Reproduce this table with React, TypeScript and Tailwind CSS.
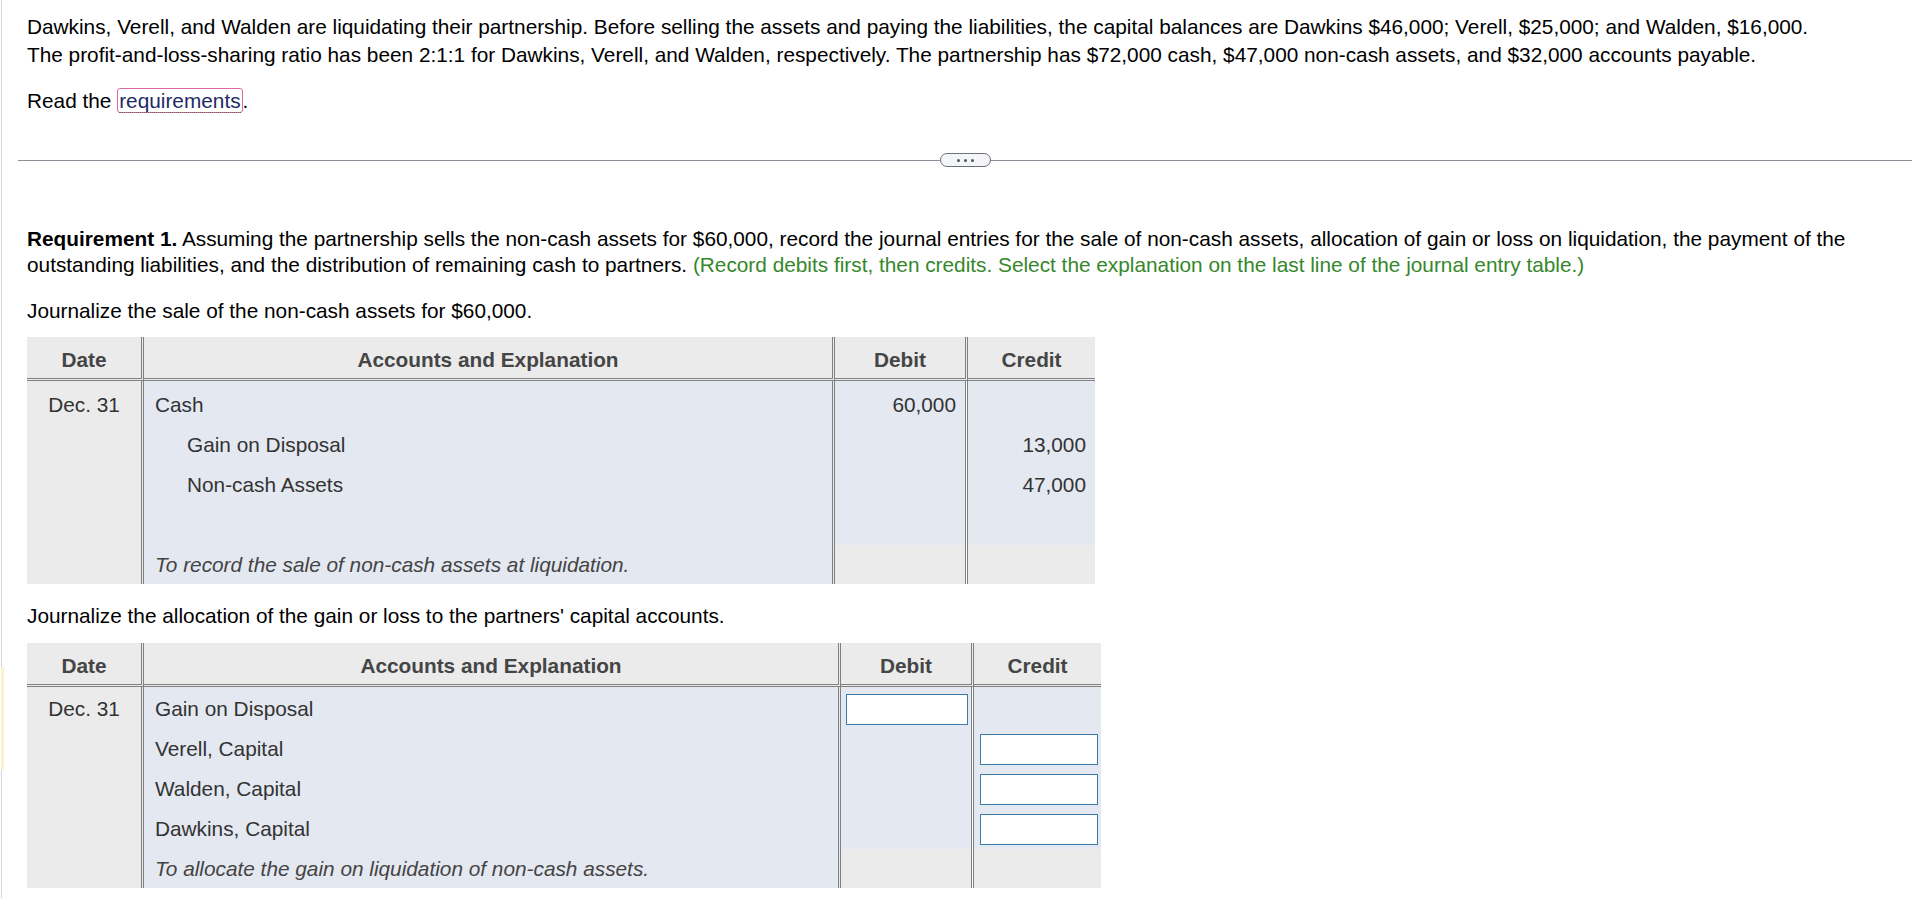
import React from 'react';

type Line = {
  text: string;
  indent?: boolean;
  debit?: string;
  credit?: string;
  debitInput?: boolean;
  creditInput?: boolean;
};

type TableProps = {
  acctW: string;
  bodyPad: string;
  lines: Line[];
  explanation: string;
};

const cellBorder = 'border-r-[3px] border-double border-[#808080]';
const headCell = 'h-[44px] pt-[4px] flex items-center justify-center bg-[#ebebeb] border-b-[3px] border-double border-[#808080]';

function JournalTable({ acctW, bodyPad, lines, explanation }: TableProps) {
  return (
    <div className="flex flex-col text-[#333]">
      {/* header */}
      <div className="flex font-bold text-[#454545]">
        <div className={`w-[117px] ${headCell} ${cellBorder}`}>Date</div>
        <div className={`${acctW} ${headCell} ${cellBorder}`}>Accounts and Explanation</div>
        <div className={`w-[133px] ${headCell} ${cellBorder}`}>Debit</div>
        <div className={`w-[127px] ${headCell}`}>Credit</div>
      </div>

      {/* body */}
      <div className="flex">
        <div className={`w-[117px] bg-[#ebebeb] ${bodyPad} ${cellBorder}`}>
          <div className="h-[40px] flex items-center justify-center">Dec. 31</div>
        </div>

        <div className={`${acctW} bg-[#e4e8f1] ${bodyPad} ${cellBorder}`}>
          {lines.map((l, i) => (
            <div key={i} className={`h-[40px] flex items-center ${l.indent ? 'pl-[43px]' : 'pl-[11px]'}`}>
              {l.text}
            </div>
          ))}
          <div className="h-[39px] flex items-center pl-[11px] italic text-[#444]">{explanation}</div>
        </div>

        <div className={`w-[133px] flex flex-col ${cellBorder}`}>
          <div className={`bg-[#e4e8f1] ${bodyPad}`}>
            {lines.map((l, i) => (
              <div key={i} className="h-[40px] flex items-center justify-end pr-[9px]">
                {l.debitInput ? (
                  <input className="h-[31px] w-[122px] -mr-[6px] border border-[#3a7bab] bg-white outline-none" />
                ) : (
                  l.debit
                )}
              </div>
            ))}
          </div>
          <div className="h-[39px] bg-[#ebebeb]" />
        </div>

        <div className="w-[127px] flex flex-col">
          <div className={`bg-[#e4e8f1] ${bodyPad}`}>
            {lines.map((l, i) => (
              <div key={i} className="h-[40px] flex items-center justify-end pr-[9px]">
                {l.creditInput ? (
                  <input className="h-[31px] w-[118px] -mr-[6px] border border-[#3a7bab] bg-white outline-none" />
                ) : (
                  l.credit
                )}
              </div>
            ))}
          </div>
          <div className="h-[39px] bg-[#ebebeb]" />
        </div>
      </div>
    </div>
  );
}

export default function App() {
  return (
    <div className="relative ml-px min-h-screen border-l border-[#d4d4dc] bg-white pl-[16px] text-[20.8px] text-black font-['Liberation_Sans',Arial,sans-serif]">
      <div className="absolute -left-px top-[667px] h-[103px] w-[3px] bg-[#fbf2d2]" />

      <div className="pl-[9px] pt-[13px] leading-[28px] whitespace-nowrap">
        <p>
          Dawkins, Verell, and Walden are liquidating their partnership. Before selling the assets and paying the
          liabilities, the capital balances are Dawkins $46,000; Verell, $25,000; and Walden, $16,000.
          <br />
          The profit-and-loss-sharing ratio has been 2:1:1 for Dawkins, Verell, and Walden, respectively. The
          partnership has $72,000 cash, $47,000 non-cash assets, and $32,000 accounts payable.
        </p>
        <p className="mt-[18px]">
          Read the{' '}
          <span className="rounded-[3px] border border-[#dc6aa3] px-px text-[#1e2a66]">
            <span className="border-b border-dotted border-[#666]">requirements</span>
          </span>
          .
        </p>
      </div>

      {/* separator */}
      <div className="mt-[38px] flex h-[14px] items-center">
        <div className="h-px flex-1 bg-[#8f8f99]" />
        <div className="flex h-[14px] w-[51px] items-center justify-center gap-[4px] rounded-full border border-[#6e6e7a] bg-[#f3f5f9]">
          <span className="h-[3px] w-[3px] rounded-full bg-[#555]" />
          <span className="h-[3px] w-[3px] rounded-full bg-[#555]" />
          <span className="h-[3px] w-[3px] rounded-full bg-[#555]" />
        </div>
        <div className="h-px flex-1 bg-[#8f8f99]" />
      </div>

      <div className="pl-[9px] leading-[26px]">
        <p className="mt-[59px] whitespace-nowrap">
          <span className="font-bold">Requirement 1.</span> Assuming the partnership sells the non-cash assets for
          $60,000, record the journal entries for the sale of non-cash assets, allocation of gain or loss on
          liquidation, the payment of the
          <br />
          outstanding liabilities, and the distribution of remaining cash to partners.{' '}
          <span className="text-[#35872a]">
            (Record debits first, then credits. Select the explanation on the last line of the journal entry table.)
          </span>
        </p>

        <p className="mt-[20px]">Journalize the sale of the non-cash assets for $60,000.</p>

        <div className="mt-[13px]">
          <JournalTable
            acctW="w-[691px]"
            bodyPad="pt-[4px]"
            explanation="To record the sale of non-cash assets at liquidation."
            lines={[
              { text: 'Cash', debit: '60,000' },
              { text: 'Gain on Disposal', indent: true, credit: '13,000' },
              { text: 'Non-cash Assets', indent: true, credit: '47,000' },
              { text: '' },
            ]}
          />
        </div>

        <p className="mt-[19px]">Journalize the allocation of the gain or loss to the partners' capital accounts.</p>

        <div className="mt-[14px]">
          <JournalTable
            acctW="w-[697px]"
            bodyPad="pt-[2px]"
            explanation="To allocate the gain on liquidation of non-cash assets."
            lines={[
              { text: 'Gain on Disposal', debitInput: true },
              { text: 'Verell, Capital', creditInput: true },
              { text: 'Walden, Capital', creditInput: true },
              { text: 'Dawkins, Capital', creditInput: true },
            ]}
          />
        </div>
      </div>
    </div>
  );
}
